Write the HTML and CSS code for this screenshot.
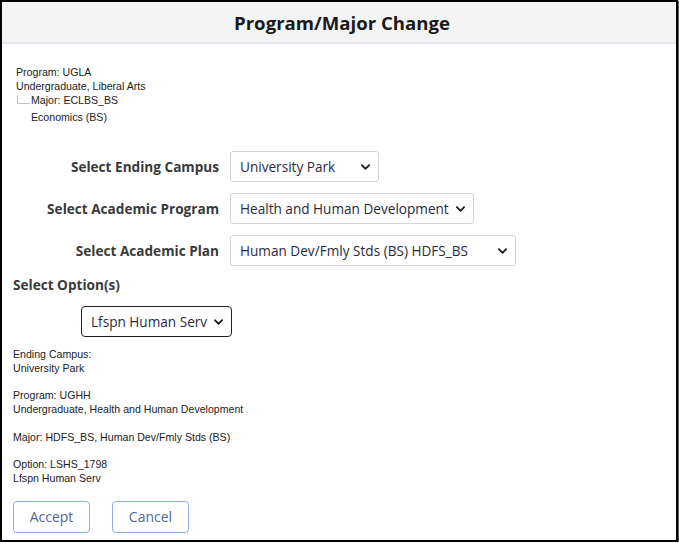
FILE: index.html
```html
<!DOCTYPE html>
<html lang="en">
<head>
<meta charset="utf-8">
<title>Program/Major Change</title>
<link rel="stylesheet" href="styles.css">
</head>
<body>
<div class="dialog">
  <header class="dialog-header">
    <h1 class="dialog-title">Program/Major Change</h1>
  </header>
  <main class="dialog-body">
    <div class="summary">
      <div class="line">Program: UGLA</div>
      <div class="line">Undergraduate, Liberal Arts</div>
      <div class="line tree-line"><span class="tree-connector"></span>Major: ECLBS_BS</div>
      <div class="line tree-child">Economics (BS)</div>
    </div>

    <div class="form">
      <label class="form-label">Select Ending Campus</label>
      <div class="select w-campus"><span class="select-text">University Park</span><svg class="chev" viewBox="0 0 10 6" width="10" height="6"><path d="M1 1 L5 5 L9 1" fill="none" stroke="#1a1a1a" stroke-width="2" stroke-linecap="round" stroke-linejoin="round"/></svg></div>

      <label class="form-label">Select Academic Program</label>
      <div class="select w-program"><span class="select-text">Health and Human Development</span><svg class="chev" viewBox="0 0 10 6" width="10" height="6"><path d="M1 1 L5 5 L9 1" fill="none" stroke="#1a1a1a" stroke-width="2" stroke-linecap="round" stroke-linejoin="round"/></svg></div>

      <label class="form-label">Select Academic Plan</label>
      <div class="select w-plan"><span class="select-text">Human Dev/Fmly Stds (BS) HDFS_BS</span><svg class="chev" viewBox="0 0 10 6" width="10" height="6"><path d="M1 1 L5 5 L9 1" fill="none" stroke="#1a1a1a" stroke-width="2" stroke-linecap="round" stroke-linejoin="round"/></svg></div>
    </div>

    <div class="options-label">Select Option(s)</div>
    <div class="select option-select"><span class="select-text">Lfspn Human Serv</span><svg class="chev" viewBox="0 0 10 6" width="10" height="6"><path d="M1 1 L5 5 L9 1" fill="none" stroke="#1a1a1a" stroke-width="2" stroke-linecap="round" stroke-linejoin="round"/></svg></div>

    <div class="result">
      <p>Ending Campus:<br>University Park</p>
      <p>Program: UGHH<br>Undergraduate, Health and Human Development</p>
      <p>Major: HDFS_BS, Human Dev/Fmly Stds (BS)</p>
      <p>Option: LSHS_1798<br>Lfspn Human Serv</p>
    </div>

    <div class="actions">
      <button class="btn">Accept</button>
      <button class="btn">Cancel</button>
    </div>
  </main>
</div>
</body>
</html>
```

FILE: styles.css
```css
html, body {
  margin: 0;
  padding: 0;
  background: #ffffff;
}

.dialog {
  box-sizing: border-box;
  width: 678px;
  height: 542px;
  border: 2px solid #000;
  box-shadow: 1px 1px 0 #555, 2px 2px 0 #bbb;
  background: #fff;
  overflow: hidden;
}

.dialog-header {
  height: 40px;
  background: #f4f4f4;
  border-bottom: 2px solid #e2e7ed;
  display: flex;
  align-items: center;
  justify-content: center;
}

.dialog-title {
  margin: 0;
  font-family: "Open Sans", sans-serif;
  font-weight: 700;
  font-size: 18.6px;
  color: #1a1a1a;
  padding-left: 6px;
}

.dialog-body {
  padding-top: 21px;
}

.summary {
  padding-left: 14px;
  font-family: "Liberation Sans", Arial, sans-serif;
  font-size: 10.6px;
  line-height: 14px;
  color: #222;
}

.tree-line {
  display: flex;
  align-items: flex-end;
}

.tree-connector {
  display: inline-block;
  width: 12px;
  height: 8px;
  margin: 0 1px 3px 1px;
  border-left: 1px solid #c4c4c4;
  border-bottom: 1px solid #c4c4c4;
}

.tree-child {
  padding-left: 15px;
  padding-top: 3px;
}

.form {
  margin-top: 27px;
  display: grid;
  grid-template-columns: 217px auto;
  grid-auto-rows: 31px;
  column-gap: 11px;
  row-gap: 11px;
  align-items: center;
  justify-items: start;
}

.form-label {
  justify-self: end;
  font-family: "Open Sans", sans-serif;
  font-weight: 700;
  font-size: 13.6px;
  color: #3a3a3a;
}

.select {
  box-sizing: border-box;
  height: 31px;
  display: flex;
  align-items: center;
  justify-content: space-between;
  padding: 0 8px 0 9px;
  border: 1px solid #d4d4d4;
  border-radius: 3px;
  background: #fff;
  font-family: "Open Sans", sans-serif;
  font-size: 13.6px;
  color: #2b2b3a;
}

.chev {
  flex: none;
  width: 9px;
  height: 6px;
}

.w-campus { width: 149px; }
.w-program { width: 244px; }
.w-plan { width: 286px; }

.options-label {
  margin-top: 9px;
  padding-left: 11px;
  font-family: "Open Sans", sans-serif;
  font-weight: 700;
  font-size: 13.6px;
  line-height: 20px;
  color: #3a3a3a;
}

.option-select {
  margin-top: 11px;
  margin-left: 79px;
  width: 151px;
  border: 1.5px solid #222;
  border-radius: 4px;
}

.result {
  margin-top: 11px;
  padding-left: 11px;
  font-family: "Liberation Sans", Arial, sans-serif;
  font-size: 10.6px;
  line-height: 13.8px;
  color: #222;
}

.result p {
  margin: 0 0 13.8px 0;
}

.result p:last-child {
  margin-bottom: 0;
}

.actions {
  margin-top: 15px;
  padding-left: 11px;
  display: flex;
  gap: 22px;
}

.btn {
  box-sizing: border-box;
  width: 77px;
  height: 32px;
  background: #fff;
  border: 1.5px solid #8fb0e3;
  border-radius: 4px;
  font-family: "Open Sans", sans-serif;
  font-size: 14px;
  color: #4f6894;
  padding: 0;
}
```
